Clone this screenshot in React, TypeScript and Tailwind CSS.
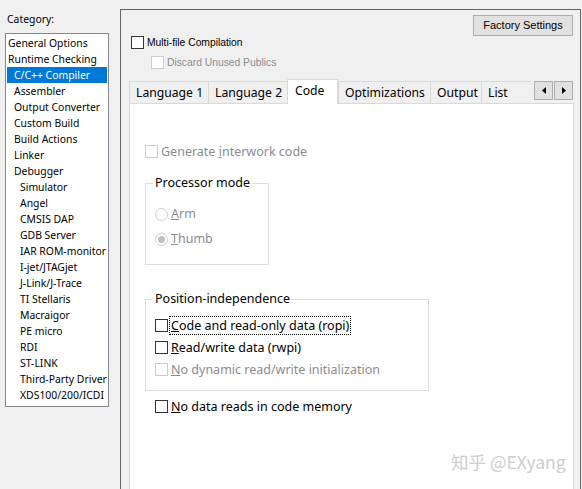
import React from 'react';

// Options dialog: category tree on the left, tabbed property page on the right
type Item = { label: string; level: 0 | 1 | 2; selected?: boolean };

const categories: Item[] = [
  { label: 'General Options', level: 0 },
  { label: 'Runtime Checking', level: 0 },
  { label: 'C/C++ Compiler', level: 1, selected: true },
  { label: 'Assembler', level: 1 },
  { label: 'Output Converter', level: 1 },
  { label: 'Custom Build', level: 1 },
  { label: 'Build Actions', level: 1 },
  { label: 'Linker', level: 1 },
  { label: 'Debugger', level: 1 },
  { label: 'Simulator', level: 2 },
  { label: 'Angel', level: 2 },
  { label: 'CMSIS DAP', level: 2 },
  { label: 'GDB Server', level: 2 },
  { label: 'IAR ROM-monitor', level: 2 },
  { label: 'I-jet/JTAGjet', level: 2 },
  { label: 'J-Link/J-Trace', level: 2 },
  { label: 'TI Stellaris', level: 2 },
  { label: 'Macraigor', level: 2 },
  { label: 'PE micro', level: 2 },
  { label: 'RDI', level: 2 },
  { label: 'ST-LINK', level: 2 },
  { label: 'Third-Party Driver', level: 2 },
  { label: 'XDS100/200/ICDI', level: 2 },
];

const tabs = [
  { label: 'Language 1', w: 'w-[79px]' },
  { label: 'Language 2', w: 'w-[79px]' },
  { label: 'Code', w: 'w-[51px]' },
  { label: 'Optimizations', w: 'w-[92px]' },
  { label: 'Output', w: 'w-[51px]' },
  { label: 'List', w: 'w-[50px]' },
];

const font = { fontFamily: '"Noto Sans", sans-serif' };
const narrow = { fontFamily: '"Liberation Sans", Arial, sans-serif' };

const Box: React.FC<{ disabled?: boolean }> = ({ disabled }) => (
  <span
    className={`inline-block w-[13px] h-[13px] shrink-0 border ${
      disabled ? 'border-[#cccccc] bg-white' : 'border-[#333333] bg-white'
    }`}
  />
);

const Radio: React.FC<{ checked?: boolean }> = ({ checked }) => (
  <span className="w-[13px] h-[13px] shrink-0 rounded-full border border-[#cccccc] bg-white flex items-center justify-center">
    {checked && <span className="w-[7px] h-[7px] rounded-full bg-[#bfbfbf]" />}
  </span>
);

const Check: React.FC<{ disabled?: boolean; children: React.ReactNode; focus?: boolean }> = ({
  disabled,
  children,
  focus,
}) => (
  <div className="flex items-center h-[13px] gap-[2px]">
    <Box disabled={disabled} />
    <span
      className={`leading-[17px] px-[1px] whitespace-nowrap ${disabled ? 'text-[#8c8c8c]' : 'text-black'} ${
        focus ? 'outline outline-1 outline-dotted outline-black' : ''
      }`}
    >
      {children}
    </span>
  </div>
);

export default function App() {
  return (
    <div
      className="w-[582px] h-[489px] bg-[#f0f0f0] overflow-hidden relative flex text-black"
      style={font}
    >
      {/* left: category list */}
      <div className="w-[120px] shrink-0 pl-[5px] pt-[11px] text-[10.4px]">
        <div className="pl-[2px] leading-[16px]">Category:</div>
        <div className="mt-[6px] w-[104px] h-[374px] bg-white border border-[#828790] pt-[1px] px-[1px]">
          {categories.map((c) => (
            <div
              key={c.label}
              className={`h-[16px] leading-[16px] whitespace-nowrap ${
                c.selected ? 'bg-[#0078d7] text-white' : ''
              } ${c.level === 0 ? 'pl-[1px]' : c.level === 1 ? 'pl-[7px]' : 'pl-[13px]'}`}
            >
              {c.label}
            </div>
          ))}
        </div>
      </div>

      {/* right: property page */}
      <div className="mt-[9px] w-[461px] h-[490px] shrink-0 border border-[#646464] flex flex-col">
        <div className="flex justify-end pt-[5px] pr-[7px]">
          <button
            className="w-[100px] h-[21px] bg-[#e1e1e1] border border-[#adadad] text-[11px] leading-[19px]"
            style={narrow}
          >
            Factory Settings
          </button>
        </div>
        <div className="pl-[10px] text-[10.3px] flex flex-col gap-[7px]" style={narrow}>
          <Check>Multi-file Compilation</Check>
          <div className="pl-[20px]">
            <Check disabled>Discard Unused Publics</Check>
          </div>
        </div>

        {/* tabs */}
        <div className="mt-[10px] ml-[8px] w-[445px] flex items-end h-[25px] text-[12.2px] overflow-hidden">
          {tabs.map((t) =>
            t.label === 'Code' ? (
              <div
                key={t.label}
                className={`${t.w} shrink-0 h-[26px] -mb-[1px] px-[7px] bg-white border border-b-0 border-[#d9d9d9] leading-[21px] relative z-10`}
              >
                {t.label}
              </div>
            ) : (
              <div
                key={t.label}
                className={`${t.w} shrink-0 h-[23px] px-[6px] bg-[#f0f0f0] border border-r-0 border-[#d9d9d9] leading-[22px] whitespace-nowrap`}
              >
                {t.label}
              </div>
            )
          )}
          <div className="flex-1 h-[23px] border-b border-[#d9d9d9]" />
        </div>
        <div className="absolute left-[534px] top-[81px] flex gap-[1px]">
          <div className="w-[19px] h-[19px] bg-[#e1e1e1] border border-[#adadad] flex items-center justify-center">
            <svg width="4" height="7" viewBox="0 0 4 7">
              <path d="M4 0 L0 3.5 L4 7 Z" fill="#000" />
            </svg>
          </div>
          <div className="w-[19px] h-[19px] bg-[#e1e1e1] border border-[#adadad] flex items-center justify-center">
            <svg width="4" height="7" viewBox="0 0 4 7">
              <path d="M0 0 L4 3.5 L0 7 Z" fill="#000" />
            </svg>
          </div>
        </div>

        {/* tab page */}
        <div className="ml-[8px] w-[445px] flex-1 mb-[3px] bg-white border border-t-0 border-[#d9d9d9] text-[12.5px] pl-[15px] pt-[41px]">
          <Check disabled>
            Generate <u>i</u>nterwork code
          </Check>

          <fieldset className="mt-[17px] w-[124px] h-[90px] border border-[#dcdcdc] px-[9px]">
            <legend className="ml-[-2px] px-[2px] leading-[16px]">Processor mode</legend>
            <div className="flex flex-col gap-[12px] pt-[17px] text-[#8c8c8c]">
              <div className="flex items-center h-[13px] gap-[3px]">
                <Radio />
                <span>
                  <u>A</u>rm
                </span>
              </div>
              <div className="flex items-center h-[13px] gap-[3px]">
                <Radio checked />
                <span>
                  <u>T</u>humb
                </span>
              </div>
            </div>
          </fieldset>

          <fieldset className="mt-[26px] w-[284px] h-[100px] border border-[#dcdcdc] px-[9px]">
            <legend className="ml-[-2px] px-[2px] leading-[16px]">Position-independence</legend>
            <div className="flex flex-col gap-[9px] pt-[12px]">
              <Check focus>
                <u>C</u>ode and read-only data (ropi)
              </Check>
              <Check>
                <u>R</u>ead/write data (rwpi)
              </Check>
              <Check disabled>
                <u>N</u>o dynamic read/write initialization
              </Check>
            </div>
          </fieldset>

          <div className="mt-[9px] pl-[10px]">
            <Check>
              <u>N</u>o data reads in code memory
            </Check>
          </div>
        </div>
      </div>

      {/* watermark */}
      <div
        className="absolute left-[451px] top-[450px] text-[17.5px] text-[#cdcdcd] leading-[24px]"
        style={{ fontFamily: '"Noto Sans CJK SC", "Noto Sans", sans-serif' }}
      >
        知乎 @EXyang
      </div>
    </div>
  );
}
